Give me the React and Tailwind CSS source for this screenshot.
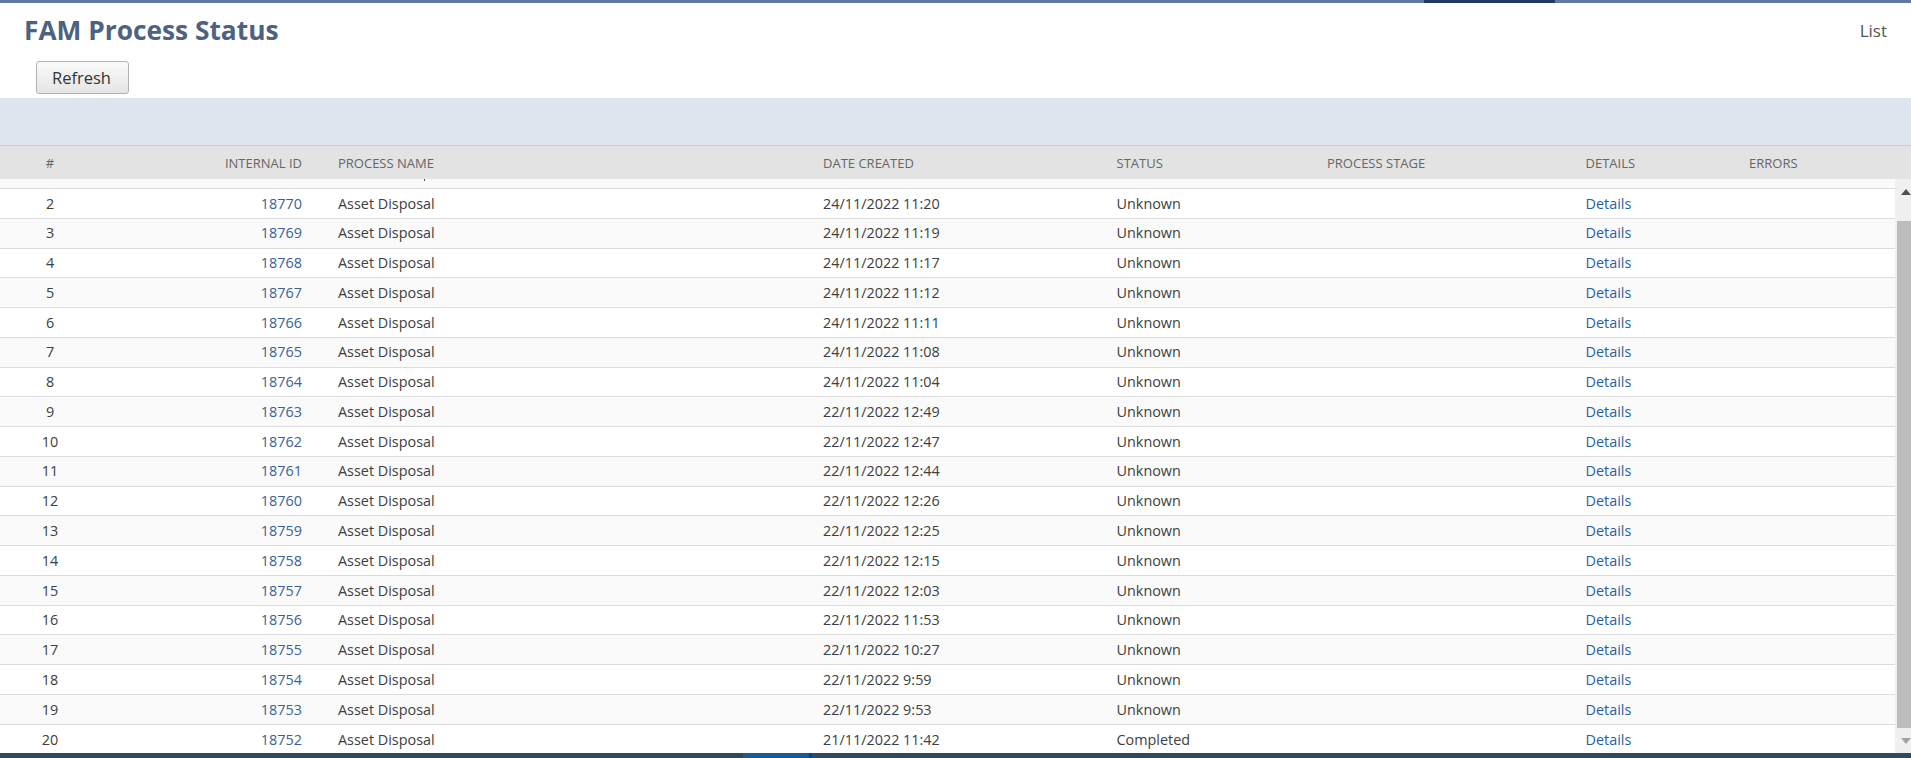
const rows = [
  [2, 18770, '24/11/2022 11:20', 'Unknown'],
  [3, 18769, '24/11/2022 11:19', 'Unknown'],
  [4, 18768, '24/11/2022 11:17', 'Unknown'],
  [5, 18767, '24/11/2022 11:12', 'Unknown'],
  [6, 18766, '24/11/2022 11:11', 'Unknown'],
  [7, 18765, '24/11/2022 11:08', 'Unknown'],
  [8, 18764, '24/11/2022 11:04', 'Unknown'],
  [9, 18763, '22/11/2022 12:49', 'Unknown'],
  [10, 18762, '22/11/2022 12:47', 'Unknown'],
  [11, 18761, '22/11/2022 12:44', 'Unknown'],
  [12, 18760, '22/11/2022 12:26', 'Unknown'],
  [13, 18759, '22/11/2022 12:25', 'Unknown'],
  [14, 18758, '22/11/2022 12:15', 'Unknown'],
  [15, 18757, '22/11/2022 12:03', 'Unknown'],
  [16, 18756, '22/11/2022 11:53', 'Unknown'],
  [17, 18755, '22/11/2022 10:27', 'Unknown'],
  [18, 18754, '22/11/2022 9:59', 'Unknown'],
  [19, 18753, '22/11/2022 9:53', 'Unknown'],
  [20, 18752, '21/11/2022 11:42', 'Completed']
]

const cols = 'grid grid-cols-[100px_238px_485px_293.5px_210.5px_258.5px_163.5px_1fr] items-center'

export default function App() {
  return (
    <div className="flex h-screen flex-col overflow-hidden bg-white font-['Open_Sans',sans-serif] text-[#404040]">
      {/* Top nav edge */}
      <div className="flex h-[3px] shrink-0 bg-[#5f7a9e]">
        <div className="ml-[1424px] w-[131px] bg-[#203a62]" />
      </div>

      {/* Title */}
      <div className="flex h-[58px] shrink-0 items-start justify-between pl-[24px] pr-[24px]">
        <h1 className="mt-[8.5px] text-[26.3px] leading-[36px] font-bold text-[#4d6280]">FAM Process Status</h1>
        <span className="mt-[16px] text-[17px] leading-[24px] text-[#555]">List</span>
      </div>

      {/* Buttons */}
      <div className="h-[37px] shrink-0 pl-[36px]">
        <button className="h-[33px] w-[93px] rounded-[3px] border border-[#b2b2b2] bg-gradient-to-b from-[#fafafa] to-[#e5e5e5] pt-[1px] pr-[2px] text-[16.5px] font-medium text-[#333]">
          Refresh
        </button>
      </div>

      <div className="h-[47px] shrink-0 bg-[#dfe5ee]" />

      {/* Table head */}
      <div className={`${cols} h-[34px] shrink-0 border-t border-[#cfcfcf] bg-[#e3e3e3] pt-[2px] text-[13px] text-[#666]`}>
        <div className="text-center">#</div>
        <div className="pr-[36px] text-right">INTERNAL ID</div>
        <div>PROCESS NAME</div>
        <div>DATE CREATED</div>
        <div>STATUS</div>
        <div>PROCESS STAGE</div>
        <div>DETAILS</div>
        <div>ERRORS</div>
      </div>

      {/* Table body */}
      <div className="flex min-h-0 flex-1">
        <div className="min-w-0 flex-1 text-[14.4px]">
          <div className="relative h-[10px] border-b border-[#dcdcdc] bg-[#fafafa]">
            <div className="absolute top-0 left-[424px] h-[2px] w-px bg-[#255a9e]" />
          </div>
          {rows.map((r, i) => (
            <div
              key={r[0]}
              className={`${cols} h-[29.78px] ${i === rows.length - 1 ? '' : 'border-b border-[#dcdcdc]'} ${i % 2 === 0 ? 'bg-white' : 'bg-[#fafafa]'}`}
            >
              <div className="text-center">{r[0]}</div>
              <a className="pr-[36px] text-right text-[#3a6298]">{r[1]}</a>
              <div>Asset Disposal</div>
              <div>{r[2]}</div>
              <div>{r[3]}</div>
              <div />
              <a className="text-[#2a5f9f]">Details</a>
              <div />
            </div>
          ))}
        </div>

        {/* Scrollbar */}
        <div className="flex w-[16px] shrink-0 flex-col bg-[#f0f0f0]">
          <div className="flex h-[42px] justify-end pt-[10px]">
            <svg width="10" height="6" viewBox="0 0 10 6"><path d="M5 0l5 6H0z" fill="#505050" /></svg>
          </div>
          <div className="ml-[2px] h-[507px] bg-[#bdbdbd]" />
          <div className="flex flex-1 justify-end pt-[10px]">
            <svg width="10" height="6" viewBox="0 0 10 6"><path d="M0 0h10L5 6z" fill="#a3a3a3" /></svg>
          </div>
        </div>
      </div>

      {/* Bottom edge */}
      <div className="flex h-[5px] shrink-0 bg-[#2f4a5f]">
        <div className="ml-[743px] w-[66px] bg-[#1a5c96]" />
        <div className="w-[3px] bg-[#173f63]" />
        <div className="w-[4px] bg-[#24506f]" />
      </div>
    </div>
  )
}
